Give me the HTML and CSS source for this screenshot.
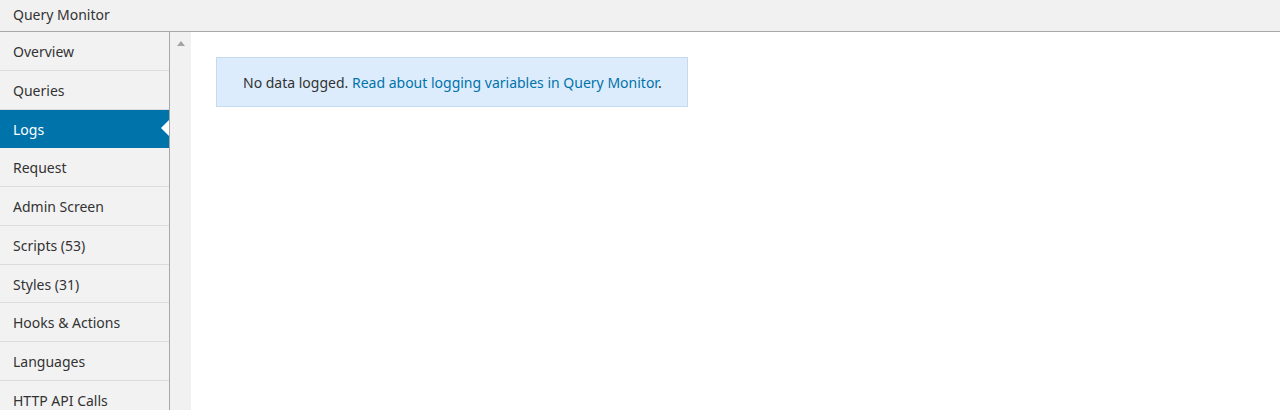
FILE: index.html
```html
<!DOCTYPE html>
<html>
<head>
<meta charset="utf-8">
<link rel="stylesheet" href="styles.css">
</head>
<body>
<div class="qm">
  <div class="qm-title">Query Monitor</div>
  <div class="qm-main">
    <nav class="qm-nav">
      <ul>
        <li>Overview</li>
        <li>Queries</li>
        <li class="active">Logs</li>
        <li>Request</li>
        <li>Admin Screen</li>
        <li>Scripts (53)</li>
        <li>Styles (31)</li>
        <li>Hooks &amp; Actions</li>
        <li>Languages</li>
        <li>HTTP API Calls</li>
      </ul>
    </nav>
    <div class="qm-scroll"><span class="qm-arrow"></span></div>
    <div class="qm-content">
      <div class="qm-notice">No data logged. <a href="#">Read about logging variables in Query Monitor</a>.</div>
    </div>
  </div>
</div>
</body>
</html>
```
FILE: styles.css
```css
html, body {
  margin: 0;
  padding: 0;
  height: 100%;
  overflow: hidden;
}
body {
  font-family: "Noto Sans", "Open Sans", sans-serif;
  font-size: 14px;
  color: #333;
  background: #fff;
}
.qm {
  display: flex;
  flex-direction: column;
  height: 410px;
}
.qm-title {
  height: 31px;
  line-height: 30px;
  padding-left: 13px;
  background: #f1f1f1;
  border-bottom: 1px solid #a7a7a7;
  color: #333;
}
.qm-main {
  display: flex;
  flex: 1;
  min-height: 0;
}
.qm-nav {
  width: 169px;
  background: #f2f2f2;
  border-right: 1px solid #a7a7a7;
  flex: none;
}
.qm-nav ul {
  list-style: none;
  margin: 0;
  padding: 0;
}
.qm-nav li {
  box-sizing: border-box;
  height: 38.75px;
  line-height: 37px;
  padding: 1px 0 0 13px;
  border-bottom: 1px solid #dcdcdc;
  color: #333;
  position: relative;
  white-space: nowrap;
}
.qm-nav li.active {
  background: #0073aa;
  color: #fff;
  border-bottom-color: #0073aa;
}
.qm-nav li.active::after {
  content: "";
  position: absolute;
  right: 0;
  top: 50%;
  margin-top: -8px;
  border: 8px solid transparent;
  border-right-color: #fff;
  border-left-width: 0;
}
.qm-scroll {
  width: 21px;
  background: #f1f1f1;
  flex: none;
  display: flex;
  justify-content: center;
  padding-top: 9px;
  box-sizing: border-box;
}
.qm-arrow {
  width: 0;
  height: 0;
  border-left: 4px solid transparent;
  border-right: 4px solid transparent;
  border-bottom: 5px solid #a3a3a3;
}
.qm-content {
  flex: 1;
  padding: 25px 25px;
}
.qm-notice {
  display: inline-block;
  background: #dcecfc;
  border: 1px solid #c5dbef;
  padding: 16px 25px 15px 26px;
  line-height: 17px;
  color: #333;
}
.qm-notice a {
  color: #0073aa;
  text-decoration: none;
}
```
